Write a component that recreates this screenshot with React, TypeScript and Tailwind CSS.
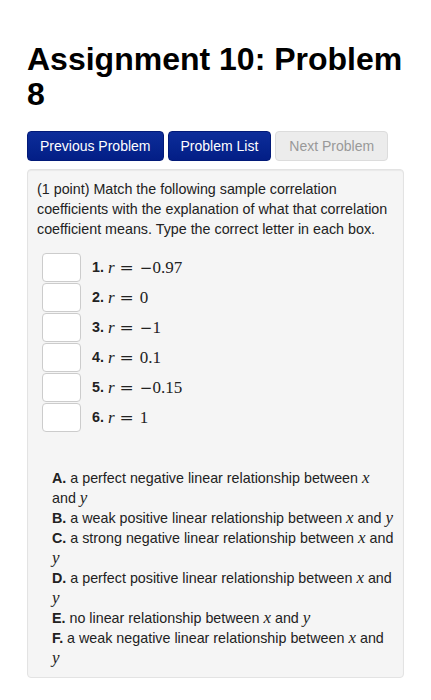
const M = ({ children }: { children: React.ReactNode }) => (
  <span className="font-['Liberation_Serif',serif] text-[17px] italic leading-none">{children}</span>
);

const Eq = ({ value }: { value: string }) => {
  const neg = value.startsWith('-');
  return (
    <span className="font-['Liberation_Serif',serif] text-[17px] leading-none">
      <span className="italic">r</span>
      <span className="ml-[5px] mr-[6px] font-['DejaVu_Serif',serif] text-[17px]">=</span>
      {neg && <span className="font-['DejaVu_Serif',serif] text-[15px]">{'\u2212'}</span>}
      {neg ? value.slice(1) : value}
    </span>
  );
};

export default function App() {
  const rows = ['-0.97', '0', '-1', '0.1', '-0.15', '1'];

  return (
    <div className="min-h-[700px] bg-white px-[27px] pt-[42px] font-['Liberation_Sans',Arial,sans-serif] text-[#222]">
      <h1 className="text-[32px] font-bold leading-[35px] text-black">Assignment 10: Problem 8</h1>

      <div className="mt-[19px] flex gap-[4px]">
        <button className="h-[30px] rounded-[4px] border border-[#021a78] bg-gradient-to-b from-[#0d2d9a] to-[#031e86] px-[12px] text-[14px] text-white">
          Previous Problem
        </button>
        <button className="h-[30px] rounded-[4px] border border-[#021a78] bg-gradient-to-b from-[#0d2d9a] to-[#031e86] px-[12px] text-[14px] text-white">
          Problem List
        </button>
        <button className="h-[30px] rounded-[4px] border border-[#dcdcdc] bg-[#ececec] px-[13px] text-[14px] text-[#999]">
          Next Problem
        </button>
      </div>

      <div className="mt-[8px] rounded-[4px] border border-[#e3e3e3] bg-[#f5f5f5] pl-[9px] pr-[6px] pt-[9px] pb-[9px] shadow-[inset_0_1px_1px_rgba(0,0,0,0.05)]">
        <p className="whitespace-nowrap text-[14.3px] leading-[20px]">
          (1 point) Match the following sample correlation
          <br />
          coefficients with the explanation of what that correlation
          <br />
          coefficient means. Type the correct letter in each box.
        </p>

        <div className="mt-[14px] flex flex-col gap-[1px] pl-[5px]">
          {rows.map((v, i) => (
            <div key={i} className="flex h-[29px] items-center">
              <div className="h-[29px] w-[39px] rounded-[4px] border border-[#ccc] bg-white" />
              <span className="ml-[11px] text-[14.3px] font-bold">{i + 1}.</span>
              <span className="ml-[4px]">
                <Eq value={v} />
              </span>
            </div>
          ))}
        </div>

        <div className="mt-[36px] ml-[15px] whitespace-nowrap text-[14.3px] leading-[20px]">
          <p>
            <b>A.</b> a perfect negative linear relationship between <M>x</M>
            <br />
            and <M>y</M>
          </p>
          <p>
            <b>B.</b> a weak positive linear relationship between <M>x</M> and <M>y</M>
          </p>
          <p>
            <b>C.</b> a strong negative linear relationship between <M>x</M> and
            <br />
            <M>y</M>
          </p>
          <p>
            <b>D.</b> a perfect positive linear relationship between <M>x</M> and
            <br />
            <M>y</M>
          </p>
          <p>
            <b>E.</b> no linear relationship between <M>x</M> and <M>y</M>
          </p>
          <p>
            <b>F.</b> a weak negative linear relationship between <M>x</M> and
            <br />
            <M>y</M>
          </p>
        </div>
      </div>
    </div>
  );
}
